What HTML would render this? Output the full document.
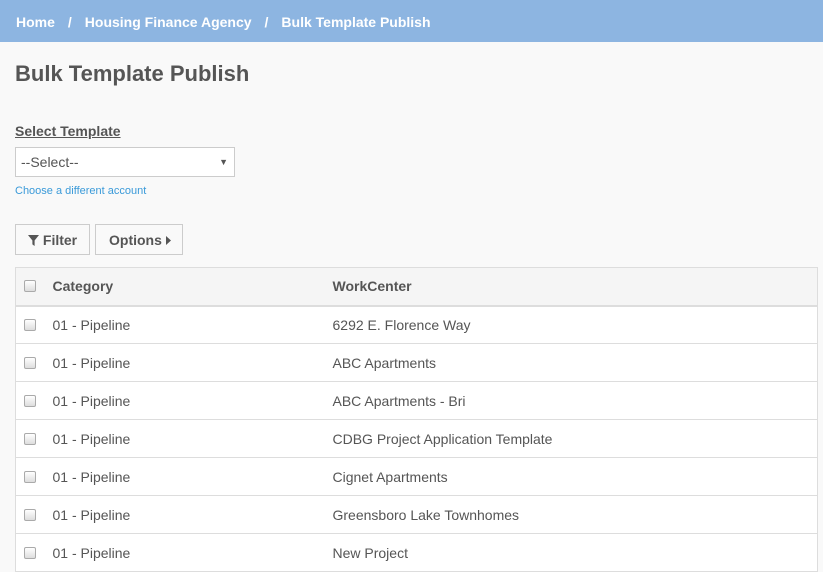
<!DOCTYPE html>
<html><head><meta charset="utf-8"><style>
*{box-sizing:border-box;margin:0;padding:0}
body{width:823px;height:572px;overflow:hidden;background:#f9f9f9;font-family:"Liberation Sans",sans-serif;color:#555}
.top{height:42px;background:#8db5e1;color:#fff;font-weight:bold;font-size:14px;line-height:44px;padding-left:16px}
.top span{margin:0 13px}
h1{position:absolute;left:15px;top:61px;font-size:22px;font-weight:bold;color:#555}
.lbl{position:absolute;left:15px;top:123px;font-size:14px;font-weight:bold;text-decoration:underline;color:#555}
.sel{position:absolute;left:15px;top:147px;width:220px;height:30px;border:1px solid #ccc;background:#fff;font-size:14px;line-height:28px;padding-left:5px;color:#555}
.sel i{position:absolute;right:6px;top:0;font-style:normal;font-size:9px}
.lnk{position:absolute;left:15px;top:185px;font-size:11px;color:#3a9ad9}
.btn{position:absolute;top:224px;height:31px;border:1px solid #ccc;background:#f9f9f9;font-size:14px;font-weight:bold;line-height:30px;color:#555}
table{position:absolute;left:15px;top:267px;width:803px;border-collapse:collapse;background:#fff;font-size:14px;border:1px solid #ddd}
td,th{height:38px;border-top:1px solid #ddd;text-align:left;padding:0;vertical-align:middle}
th{background:#f5f5f5;font-weight:bold;border-bottom:2px solid #ddd}
.cb{width:37px;padding-left:8px}
.cb b{display:block;width:12px;height:12px;border:1px solid #aaa;border-radius:2px;background:linear-gradient(#fff,#ddd)}
.c1{width:280px}
</style></head><body>
<div class="top">Home<span>/</span>Housing Finance Agency<span>/</span>Bulk Template Publish</div>
<h1>Bulk Template Publish</h1>
<div class="lbl">Select Template</div>
<div class="sel">--Select--<i>▼</i></div>
<div class="lnk">Choose a different account</div>
<div class="btn" style="left:15px;width:75px;padding-left:12px">
<svg width="11" height="11" viewBox="0 0 10 10" style="vertical-align:-1px"><path d="M0 0H10L6 5V10L4 8.5V5Z" fill="#555"/></svg> Filter</div>
<div class="btn" style="left:95px;width:88px;padding-left:13px">Options <svg width="5" height="9" viewBox="0 0 5 9"><path d="M0 0L5 4.5L0 9Z" fill="#555"/></svg></div>
<table>
<tr><th class="cb"><b></b></th><th class="c1">Category</th><th>WorkCenter</th></tr>
<tr><td class="cb"><b></b></td><td>01 - Pipeline</td><td>6292 E. Florence Way</td></tr>
<tr><td class="cb"><b></b></td><td>01 - Pipeline</td><td>ABC Apartments</td></tr>
<tr><td class="cb"><b></b></td><td>01 - Pipeline</td><td>ABC Apartments - Bri</td></tr>
<tr><td class="cb"><b></b></td><td>01 - Pipeline</td><td>CDBG Project Application Template</td></tr>
<tr><td class="cb"><b></b></td><td>01 - Pipeline</td><td>Cignet Apartments</td></tr>
<tr><td class="cb"><b></b></td><td>01 - Pipeline</td><td>Greensboro Lake Townhomes</td></tr>
<tr><td class="cb"><b></b></td><td>01 - Pipeline</td><td>New Project</td></tr>
</table>
</body></html>
